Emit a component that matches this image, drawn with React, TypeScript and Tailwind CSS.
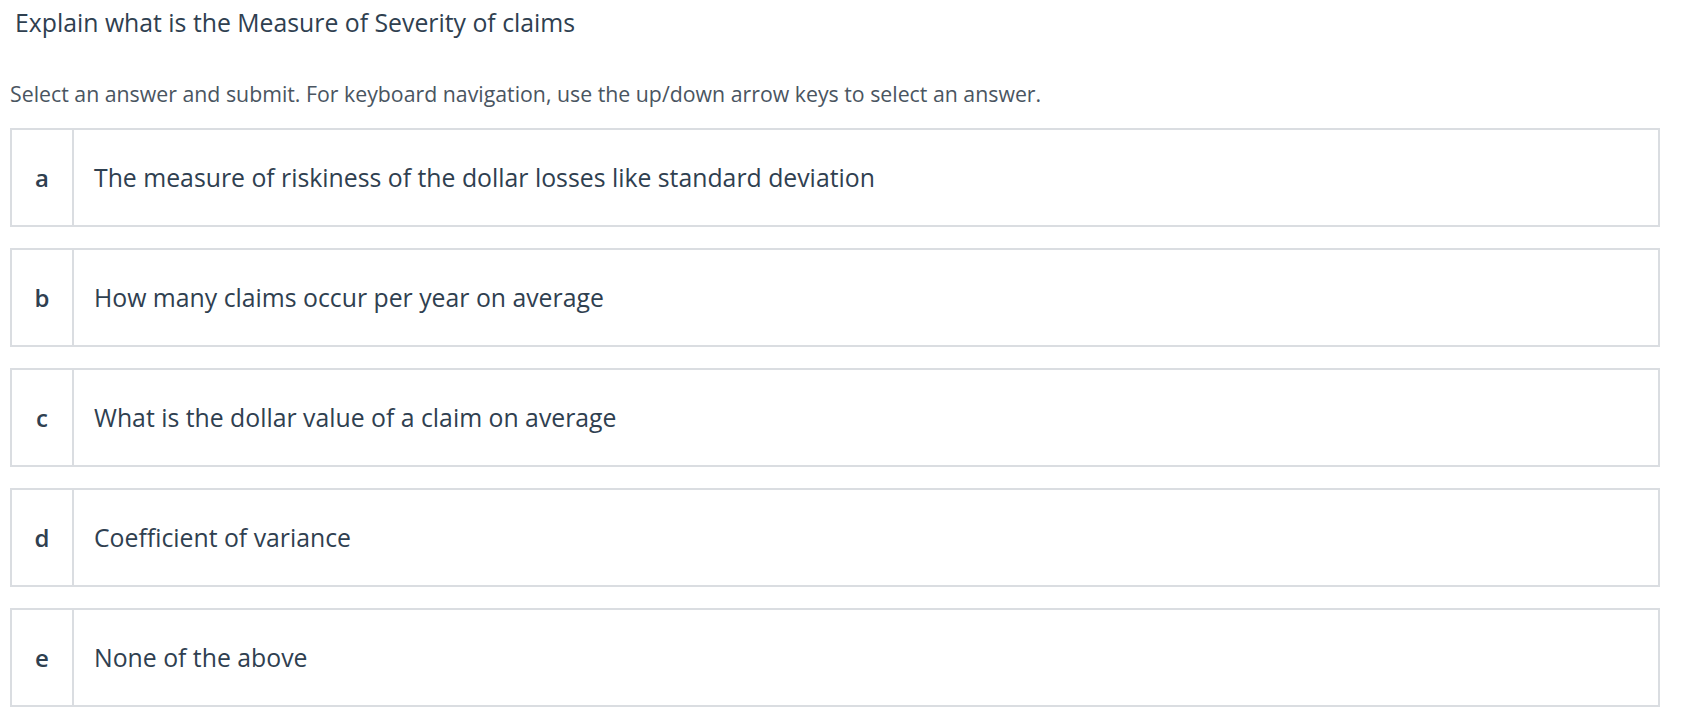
import React from 'react';

const options = [
  { key: 'a', text: 'The measure of riskiness of the dollar losses like standard deviation' },
  { key: 'b', text: 'How many claims occur per year on average' },
  { key: 'c', text: 'What is the dollar value of a claim on average' },
  { key: 'd', text: 'Coefficient of variance' },
  { key: 'e', text: 'None of the above' },
];

export default function App() {
  return (
    <div className="min-h-screen bg-white pl-[10px] font-['Open_Sans',sans-serif] text-[#2f4050]">
      {/* Question */}
      <h1 className="pl-[5px] pt-[7px] text-[24.8px] leading-[30px] font-normal text-[#2f4050]">
        Explain what is the Measure of Severity of claims
      </h1>
      <p className="mt-[43px] text-[21.3px] leading-[28px] text-[#4a5561]">
        Select an answer and submit. For keyboard navigation, use the up/down arrow keys to select an answer.
      </p>

      {/* Options */}
      <div className="mt-[20px] flex w-[1650px] flex-col gap-[21px]">
        {options.map((opt) => (
          <div
            key={opt.key}
            className="flex h-[99px] items-center border-2 border-[#dadde1] bg-white"
          >
            <div className="flex h-full w-[62px] items-center justify-center border-r-2 border-[#dadde1] text-[24px] font-semibold text-[#2f4050]">
              {opt.key}
            </div>
            <div className="pl-[20px] text-[24.8px] text-[#2f4050]">{opt.text}</div>
          </div>
        ))}
      </div>
    </div>
  );
}
